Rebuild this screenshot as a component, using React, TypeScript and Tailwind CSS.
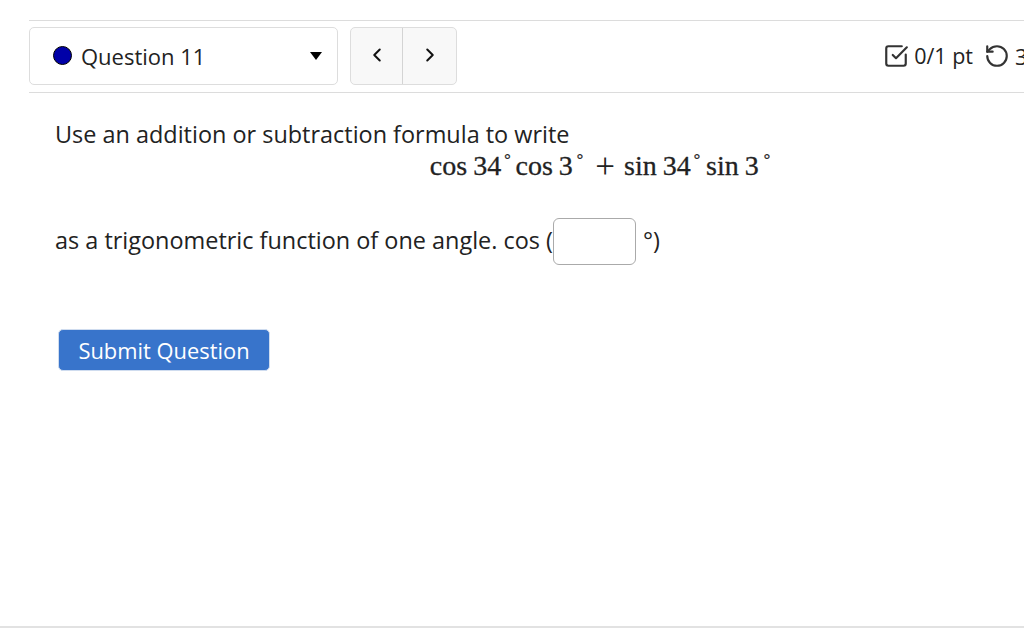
import { ChevronLeft, ChevronRight, RotateCcw, SquareCheckBig } from "lucide-react";

function Degree({ gap = "ml-[3px]" }: { gap?: string }) {
	return <span className={`-mt-[12px] text-[16px] ${gap}`}>°</span>;
}

function MathLine() {
	return (
		<div className="flex h-[30px] items-center justify-center pl-[176px] font-['Liberation_Serif',serif] text-[28px] leading-none text-[#222] [-webkit-text-stroke:0.3px_#222]">
			<span>cos</span>
			<span className="ml-[6px]">34</span>
			<Degree />
			<span className="ml-[5px]">cos</span>
			<span className="ml-[6px]">3</span>
			<Degree gap="ml-[4px]" />
			<span className="ml-[12px] text-[35px] [-webkit-text-stroke:0]">+</span>
			<span className="ml-[9px]">sin</span>
			<span className="ml-[6px]">34</span>
			<Degree />
			<span className="ml-[6px]">sin</span>
			<span className="ml-[6px]">3</span>
			<Degree gap="ml-[5px]" />
		</div>
	);
}

export default function App() {
	return (
		<div className="flex h-[640px] w-[1024px] flex-col overflow-hidden bg-white font-['Open_Sans',sans-serif] text-[#222]">
			<div className="ml-[29px] mt-[20px] flex h-[73px] w-[995px] shrink-0 items-start gap-3 border-y border-[#dcdcdc] pt-[6px]">
				<div className="flex h-[58px] w-[309px] shrink-0 items-center rounded-[5px] border border-[#dddddd] pl-[23px] pr-[15px]">
					<span className="-mt-[2px] h-[19px] w-[19px] shrink-0 rounded-full border border-black bg-[#0000a8]" />
					<span className="ml-[9px] text-[22px] leading-none">Question 11</span>
					<span className="ml-auto h-0 w-0 border-x-[6px] border-t-[8px] border-x-transparent border-t-black" />
				</div>
				<div className="flex h-[58px] w-[107px] shrink-0 rounded-[5px] border border-[#dddddd] bg-[#f8f8f8]">
					<div className="flex w-[52px] items-center justify-center border-r border-[#d4d4d4] pb-[2px]">
						<ChevronLeft className="h-[22px] w-[22px] text-[#111]" strokeWidth={2.2} />
					</div>
					<div className="flex flex-1 items-center justify-center pb-[2px]">
						<ChevronRight className="h-[22px] w-[22px] text-[#111]" strokeWidth={2.2} />
					</div>
				</div>
				<div className="ml-auto flex h-[58px] shrink-0 items-center">
					<SquareCheckBig className="h-[26px] w-[26px] text-[#333]" strokeWidth={2} />
					<span className="ml-[5px] text-[21.5px] leading-none">0/1 pt</span>
					<RotateCcw className="ml-[11px] h-[26px] w-[26px] text-[#333]" strokeWidth={2} />
					<span className="ml-[5px] w-[9px] overflow-hidden text-[22px] leading-none">3</span>
				</div>
			</div>
			<div className="px-[55px] pt-[25px] text-[23.45px] leading-[32px]">
				<p>Use an addition or subtraction formula to write</p>
				<div className="pt-[1px]">
					<MathLine />
				</div>
				<div className="mt-[36px] flex h-[48px] items-center">
					<span className="-mt-[3px]">as a trigonometric function of one angle. cos (</span>
					<span className="h-[47px] w-[83px] rounded-[6px] border border-[#aaaaaa] bg-white" />
					<span className="-mt-[3px] ml-[7px]">°)</span>
				</div>
				<button className="ml-[3px] mt-[64px] flex h-[42px] w-[212px] items-center justify-center rounded-[5px] border border-[#cfdcef] bg-[#3874cb] pt-[1px] text-[21.9px] text-white">
					Submit Question
				</button>
			</div>
			<div className="mt-auto mb-[12px] h-[2px] w-full bg-[#e2e2e2]" />
		</div>
	);
}
